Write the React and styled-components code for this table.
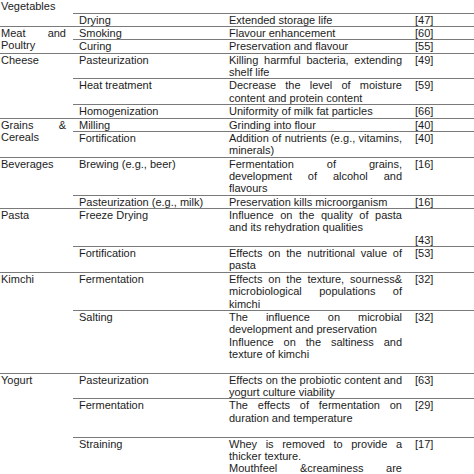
import styled, { createGlobalStyle } from 'styled-components';

const LINE = 12.36;

const GlobalStyle = createGlobalStyle`
  html, body {
    margin: 0;
    padding: 0;
    background: #fff;
    overflow: hidden;
  }
  body {
    font-family: "Liberation Sans", Arial, sans-serif;
    font-size: 11px;
    color: #1c1c1c;
  }
`;

const Table = styled.div`
  width: 474px;
  padding-top: 0.3px;
  line-height: ${LINE}px;
`;

const Group = styled.div`
  display: grid;
  grid-template-columns: 73px 1fr;
  border-top: ${(p) => (p.$first ? 'none' : '1px solid #7a7a7a')};
`;

const Category = styled.div`
  padding: 0 7px 0 1px;
  text-align: justify;
`;

const Rows = styled.div`
  display: flex;
  flex-direction: column;
`;

const Row = styled.div`
  display: grid;
  grid-template-columns: 150px 185px 1fr;
  padding-bottom: ${(p) => (p.$extra || 0) * LINE}px;
  & + & {
    border-top: 1px solid #7a7a7a;
  }
`;

const Method = styled.div`
  padding: 0 6px;
  white-space: nowrap;
`;

const Effect = styled.div`
  padding: 0 6px;
  text-align: justify;
  min-height: ${LINE}px;
`;

const Para = styled.p`
  margin: 0;
`;

const Ref = styled.div`
  padding-left: 7px;
  padding-top: ${(p) => (p.$offset || 0) * LINE}px;
`;

const groups = [
  {
    name: 'Vegetables',
    rows: [
      { method: '', effect: [], ref: '' },
      { method: 'Drying', effect: ['Extended storage life'], ref: '[47]' },
    ],
  },
  {
    name: 'Meat and Poultry',
    rows: [
      { method: 'Smoking', effect: ['Flavour enhancement'], ref: '[60]' },
      { method: 'Curing', effect: ['Preservation and flavour'], ref: '[55]' },
    ],
  },
  {
    name: 'Cheese',
    rows: [
      { method: 'Pasteurization', effect: ['Killing harmful bacteria, extending shelf life'], ref: '[49]' },
      { method: 'Heat treatment', effect: ['Decrease the level of moisture content and protein content'], ref: '[59]' },
      { method: 'Homogenization', effect: ['Uniformity of milk fat particles'], ref: '[66]' },
    ],
  },
  {
    name: 'Grains & Cereals',
    rows: [
      { method: 'Milling', effect: ['Grinding into flour'], ref: '[40]' },
      { method: 'Fortification', effect: ['Addition of nutrients (e.g., vitamins, minerals)'], ref: '[40]' },
    ],
  },
  {
    name: 'Beverages',
    rows: [
      { method: 'Brewing (e.g., beer)', effect: ['Fermentation of grains, development of alcohol and flavours'], ref: '[16]' },
      { method: 'Pasteurization (e.g., milk)', effect: ['Preservation kills microorganism'], ref: '[16]' },
    ],
  },
  {
    name: 'Pasta',
    rows: [
      { method: 'Freeze Drying', effect: ['Influence on the quality of pasta and its rehydration qualities'], ref: '[43]', offset: 2 },
      { method: 'Fortification', effect: ['Effects on the nutritional value of pasta'], ref: '[53]' },
    ],
  },
  {
    name: 'Kimchi',
    rows: [
      { method: 'Fermentation', effect: ['Effects on the texture, sourness& microbiological populations of kimchi'], ref: '[32]' },
      {
        method: 'Salting',
        effect: ['The influence on microbial development and preservation', 'Influence on the saltiness and texture of kimchi'],
        ref: '[32]',
        extra: 1,
      },
    ],
  },
  {
    name: 'Yogurt',
    rows: [
      { method: 'Pasteurization', effect: ['Effects on the probiotic content and yogurt culture viability'], ref: '[63]' },
      { method: 'Fermentation', effect: ['The effects of fermentation on duration and temperature'], ref: '[29]', extra: 1 },
      {
        method: 'Straining',
        effect: ['Whey is removed to provide a thicker texture.', 'Mouthfeel &creaminess are improved by the straining process'],
        ref: '[17]',
      },
    ],
  },
];

const App = () => {
  return (
    <>
      <GlobalStyle />
      <Table>
        {groups.map((g, i) => (
          <Group key={g.name} $first={i === 0}>
            <Category>{g.name}</Category>
            <Rows>
              {g.rows.map((r, j) => (
                <Row key={j} $extra={r.extra}>
                  <Method>{r.method}</Method>
                  <Effect>
                    {r.effect.map((t) => (
                      <Para key={t}>{t}</Para>
                    ))}
                  </Effect>
                  <Ref $offset={r.offset}>{r.ref}</Ref>
                </Row>
              ))}
            </Rows>
          </Group>
        ))}
      </Table>
    </>
  );
};

export default App;
